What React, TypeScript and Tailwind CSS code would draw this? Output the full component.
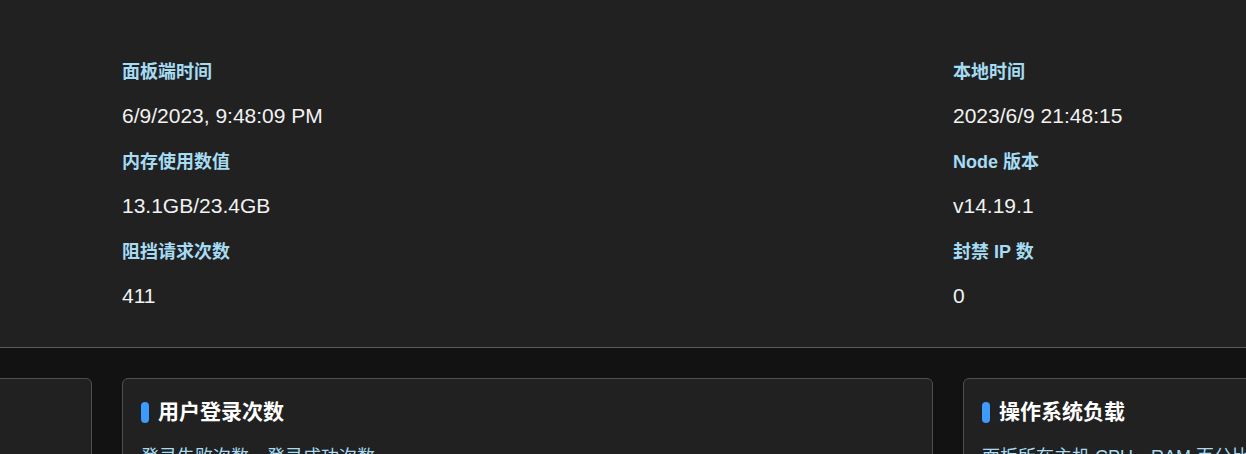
const stats = [
  [
    { label: '面板端时间', value: '6/9/2023, 9:48:09 PM' },
    { label: '内存使用数值', value: '13.1GB/23.4GB' },
    { label: '阻挡请求次数', value: '411' },
  ],
  [
    { label: '本地时间', value: '2023/6/9 21:48:15' },
    { label: 'Node 版本', value: 'v14.19.1' },
    { label: '封禁 IP 数', value: '0' },
  ],
];

const cards = [
  { title: '面板信息', desc: '面板运行时长、面板版本与构建信息' },
  { title: '用户登录次数', desc: '登录失败次数、登录成功次数' },
  { title: '操作系统负载', desc: '面板所在主机 CPU、RAM 百分比使用率' },
];

function StatItem({ label, value }: { label: string; value: string }) {
  return (
    <div className="mb-[20px]">
      <div className="text-[18px] font-bold leading-[24px] text-[#a5dbf3]">{label}</div>
      <div className="mt-[18px] text-[21px] leading-[28px] text-[#f2f2f2]">{value}</div>
    </div>
  );
}

function Card({ title, desc }: { title: string; desc: string }) {
  return (
    <div className="h-[200px] w-[811px] shrink-0 rounded-[6px] border border-[#4e4e4e] bg-[#212121] px-[18px] pt-[19px]">
      <div className="flex h-[28px] items-center gap-[9px]">
        <span className="h-[21px] w-[8px] rounded-[4px] bg-[#3d9bff]" />
        <h3 className="text-[21px] font-bold text-white">{title}</h3>
      </div>
      <p className="mt-[17px] text-[18px] leading-[28px] text-[#a5dbf3]">{desc}</p>
    </div>
  );
}

export default function App() {
  return (
    <div
      className="h-screen overflow-hidden bg-[#121212]"
      style={{ fontFamily: '"Liberation Sans", Arial, "Noto Sans CJK SC", sans-serif' }}
    >
      <section className="grid h-[348px] grid-cols-[831px_1fr] border-b border-[#5c5c5c] bg-[#212121] pl-[122px] pt-[60px]">
        {stats.map((col, i) => (
          <div key={i}>
            {col.map((s) => (
              <StatItem key={s.label} label={s.label} value={s.value} />
            ))}
          </div>
        ))}
      </section>

      <div className="ml-[-719px] flex gap-[30px] pt-[30px]">
        {cards.map((c) => (
          <Card key={c.title} title={c.title} desc={c.desc} />
        ))}
      </div>
    </div>
  );
}
